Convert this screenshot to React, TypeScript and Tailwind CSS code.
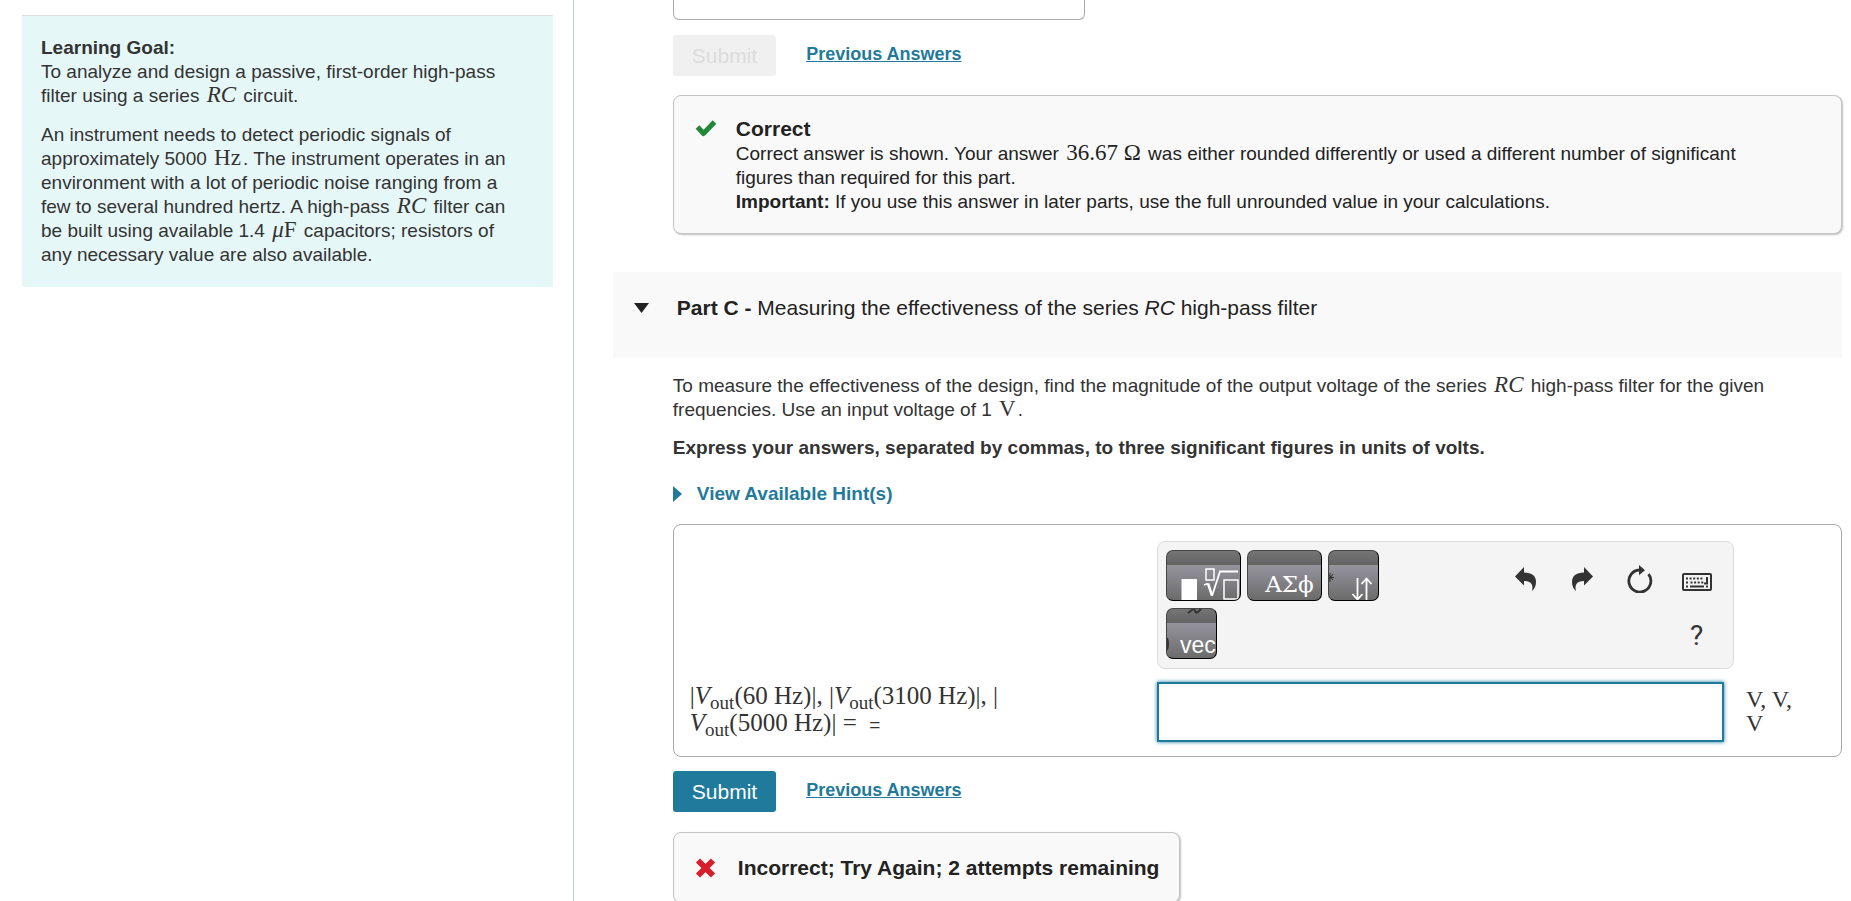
import type { ReactNode } from "react";

function Var({ children }: { children: ReactNode }) {
    return <span className="mx-[2px] font-['Liberation_Serif',serif] italic text-[23px] leading-5">{children}</span>;
}

function Unit({ children }: { children: ReactNode }) {
    return <span className="mx-[2px] font-['Liberation_Serif',serif] text-[23px] leading-5">{children}</span>;
}

function Vout() {
    return (
        <>
            <i>V</i>
            <sub className="text-[19px] leading-0">out</sub>
        </>
    );
}

const paletteButton =
    "relative h-[51px] overflow-hidden rounded-[7px] border border-[#444] border-r-black border-b-black bg-[linear-gradient(#757575_0,#636363_14px,#95949e_14px,#6b6b6b_100%)] text-white";

const iconButton = "flex h-[57px] w-[57px] items-center justify-center text-[#333]";

const answersLink = "pb-[3px] text-[18px] font-bold text-[#1f7a9c] underline";

function Toolbar() {
    return (
        <div className="flex justify-between rounded-lg border border-[#dcdcdc] bg-[#f4f4f4] px-2 pt-2 pb-1">
            <div className="flex w-[250px] flex-wrap content-start gap-x-[6px] gap-y-[7px]">
                <button type="button" aria-label="Templates" className={`${paletteButton} w-[75px]`}>
                    <svg className="absolute inset-0" width="73" height="49" viewBox="0 0 73 49" fill="none" stroke="white">
                        <rect x="14.500" y="28" width="15.500" height="21" fill="white" stroke="none" />
                        <rect x="39" y="18" width="8" height="11" strokeWidth="1.500" />
                        <path d="M37 34l4-1.500" strokeWidth="1.500" />
                        <path d="M41 32.500l4 12" strokeWidth="2.500" />
                        <path d="M45 45l8-24.500h18" strokeWidth="1.800" />
                        <rect x="57" y="29" width="14" height="19" strokeWidth="1.500" />
                    </svg>
                </button>
                <button type="button" className={`${paletteButton} w-[75px] pt-4 pl-[10px] text-center font-['DejaVu_Serif',serif] text-[23px] leading-8`}>
                    ΑΣϕ
                </button>
                <button type="button" aria-label="Arrows" className={`${paletteButton} w-[51px]`}>
                    <svg className="absolute inset-0" width="49" height="49" viewBox="0 0 49 49" fill="none" stroke="white" strokeWidth="1.800">
                        <path d="M0 24l4 5M0 29l4-6M0 26.500h5M1 22v9" stroke="#333" strokeWidth="1" />
                        <path d="M28.500 27v21M23.500 43l5 5.500 5-5.500M37.500 49V28M32.500 33l5-5.500 5 5.500" />
                    </svg>
                </button>
                <button type="button" className={`${paletteButton} w-[51px] pt-5 pl-[13px] text-left text-[23px] leading-8`}>
                    <svg className="absolute inset-0" width="49" height="49" viewBox="0 0 49 49" fill="none" stroke="#333" strokeWidth="2">
                        <path d="M21 4l6-4.500M27 0l2 3.500 2-.5 3-3M0 29q2 6 0 12" />
                    </svg>
                    vec
                </button>
            </div>
            <div className="flex w-[228px] flex-wrap justify-end">
                <button type="button" aria-label="Undo" className={iconButton}>
                    <svg width="22" height="24" viewBox="0 0 22 24" fill="currentColor">
                        <path d="M0 9.500L9 0v5.500C17 5.500 21 9 21 15c0 4-1.500 7-4 9 1.500-6-.5-10-8-10v4.500z" />
                    </svg>
                </button>
                <button type="button" aria-label="Redo" className={iconButton}>
                    <svg width="22" height="24" viewBox="0 0 22 24" fill="currentColor">
                        <path d="M21 9.500L12 0v5.500C4 5.500 0 9 0 15c0 4 1.500 7 4 9-1.500-6 .5-10 8-10v4.500z" />
                    </svg>
                </button>
                <button type="button" aria-label="Reset" className={iconButton}>
                    <svg width="26" height="28" viewBox="0 0 26 28" fill="none">
                        <path d="M21.500 9.200A11 11 0 1 1 12.500 5" stroke="currentColor" strokeWidth="2.800" />
                        <path d="M12 0l6 5.200-6 5z" fill="currentColor" />
                    </svg>
                </button>
                <button type="button" aria-label="Keyboard shortcuts" className={iconButton}>
                    <svg className="mt-[6px]" width="30" height="18" viewBox="0 0 30 18" fill="none" stroke="currentColor">
                        <rect x="1" y="1" width="28" height="16" rx="1" strokeWidth="2" />
                        <path d="M4 5.500h18" strokeWidth="2" strokeDasharray="2 1.600" />
                        <path d="M4 9.500h3M8.500 9.500h14" strokeWidth="2" strokeDasharray="2 1.600" />
                        <path d="M25 4v6.500h-3" strokeWidth="2" />
                        <path d="M4 13.500h2M8 13.500h14M24 13.500h2" strokeWidth="2" />
                    </svg>
                </button>
                <button type="button" aria-label="Help" className={`${iconButton} font-[Roboto,sans-serif] text-[28px]`}>
                    ?
                </button>
            </div>
        </div>
    );
}

export default function App() {
    return (
        <div className="flex h-screen overflow-hidden bg-white font-['Liberation_Sans',Arial,sans-serif] text-[19px] leading-6 text-[#333]">
            {/* Problem statement */}
            <aside className="w-[31%] shrink-0 border-r border-[#c3cbdb] pt-[15px] pr-5 pl-[22px]">
                <div className="border-t border-[#ddd] bg-[#e6f7f8] pt-5 pr-8 pb-5 pl-[19px]">
                    <h2 className="font-bold">Learning Goal:</h2>
                    <p>
                        To analyze and design a passive, first-order high-pass filter using a series <Var>RC</Var> circuit.
                    </p>
                    <p className="mt-[15px]">
                        An instrument needs to detect periodic signals of approximately 5000 <Unit>Hz</Unit>. The instrument
                        operates in an environment with a lot of periodic noise ranging from a few to several hundred hertz. A
                        high-pass <Var>RC</Var> filter can be built using available 1.4 <Unit><i>μ</i>F</Unit> capacitors;
                        resistors of any necessary value are also available.
                    </p>
                </div>
            </aside>

            <main className="min-w-0 flex-1 pr-[9px] pl-[39px]">
                {/* Part B result */}
                <section className="pl-[60px]">
                    <div className="h-5 w-[412px] rounded-b-md border border-t-0 border-[#a9a9a9]" />
                    <div className="mt-[15px] flex items-center gap-[30px]">
                        <button type="button" disabled className="h-[41px] rounded-[3px] bg-[#f0f0f0] px-[19px] text-[21px] text-[#dcdcdc]">
                            Submit
                        </button>
                        <a href="#previous-b" className={answersLink}>Previous Answers</a>
                    </div>
                    <div className="mt-[19px] flex rounded-lg border border-[#c4c4c4] bg-[#f9f9f9] pt-5 pr-16 pb-[19px] pl-[21px] shadow-[1px_1px_2px_rgba(0,0,0,0.25)]">
                        <svg className="mt-[3px] shrink-0" width="22" height="18" viewBox="0 0 22 18" fill="none">
                            <path d="M2.500 8l6 6.500L19.500 3" stroke="#218739" strokeWidth="5" strokeLinejoin="round" />
                        </svg>
                        <div className="ml-[19px] text-[#222]">
                            <h3 className="text-[21px] leading-[26px] font-bold">Correct</h3>
                            <p>
                                Correct answer is shown. Your answer <Unit>36.67 Ω</Unit> was either rounded differently or used a
                                different number of significant figures than required for this part.
                            </p>
                            <p>
                                <b>Important:</b> If you use this answer in later parts, use the full unrounded value in your
                                calculations.
                            </p>
                        </div>
                    </div>
                </section>

                {/* Part C */}
                <header className="mt-[38px] flex h-[86px] bg-[#f9f9f9] pt-6 pl-[21px] text-[21px] text-[#222]">
                    <svg className="mt-[7px]" width="15" height="10" viewBox="0 0 15 10" fill="currentColor">
                        <path d="M0 0h15L7.500 10z" />
                    </svg>
                    <h2 className="ml-7">
                        <b>Part C - </b>Measuring the effectiveness of the series <i>RC</i> high-pass filter
                    </h2>
                </header>
                <section className="pt-4 pl-[60px]">
                    <p>
                        To measure the effectiveness of the design, find the magnitude of the output voltage of the series{" "}
                        <Var>RC</Var> high-pass filter for the given frequencies. Use an input voltage of 1 <Unit>V</Unit>.
                    </p>
                    <p className="mt-[14px] font-bold">
                        Express your answers, separated by commas, to three significant figures in units of volts.
                    </p>
                    <button type="button" className="mt-[22px] flex items-center gap-[15px] font-bold text-[#1f7a9c]">
                        <svg width="9" height="16" viewBox="0 0 9 16" fill="currentColor">
                            <path d="M0 0l9 8-9 8z" />
                        </svg>
                        View Available Hint(s)
                    </button>

                    <div className="mt-[18px] grid grid-cols-[41.4%_minmax(0,1fr)_107px] items-end rounded-lg border border-[#a9a9a9] pt-4 pb-[14px]">
                        <label htmlFor="answer" className="pb-1 pl-4 font-['Liberation_Serif',serif] text-[25px] leading-[27px]">
                            |<Vout />(60 Hz)|, |<Vout />(3100 Hz)|, |<br />
                            <Vout />(5000 Hz)| = &nbsp;<span className="font-['Liberation_Sans',sans-serif] text-[19px]">=</span>
                        </label>
                        <div>
                            <Toolbar />
                            <input id="answer" type="text" className="mt-[13px] block h-[60px] w-[calc(100%-10px)] border-2 border-[#1f7a9c] bg-white px-3 shadow-[0_0_4px_#1f7a9c] outline-none" />
                        </div>
                        <span className="pb-[7px] pl-3 font-['Liberation_Serif',serif] text-[24px] leading-6">
                            V, V,
                            <br />V
                        </span>
                    </div>

                    <div className="mt-[14px] flex items-center gap-[30px]">
                        <button type="button" className="h-[41px] rounded-[3px] bg-[#1f7a9c] px-[19px] text-[21px] text-white">
                            Submit
                        </button>
                        <a href="#previous-c" className={answersLink}>Previous Answers</a>
                    </div>
                    <div className="mt-5 flex h-[71px] w-fit items-center rounded-lg border border-[#c4c4c4] bg-[#f9f9f9] pr-5 pl-[21px] text-[21px] font-bold text-[#222] shadow-[1px_1px_2px_rgba(0,0,0,0.25)]">
                        <svg className="mr-[22px]" width="21" height="20" viewBox="0 0 21 20" fill="none">
                            <path d="M3 2.500l15 15M18 2.500l-15 15" stroke="#d71f2b" strokeWidth="6" />
                        </svg>
                        Incorrect; Try Again; 2 attempts remaining
                    </div>
                </section>
            </main>
        </div>
    );
}
